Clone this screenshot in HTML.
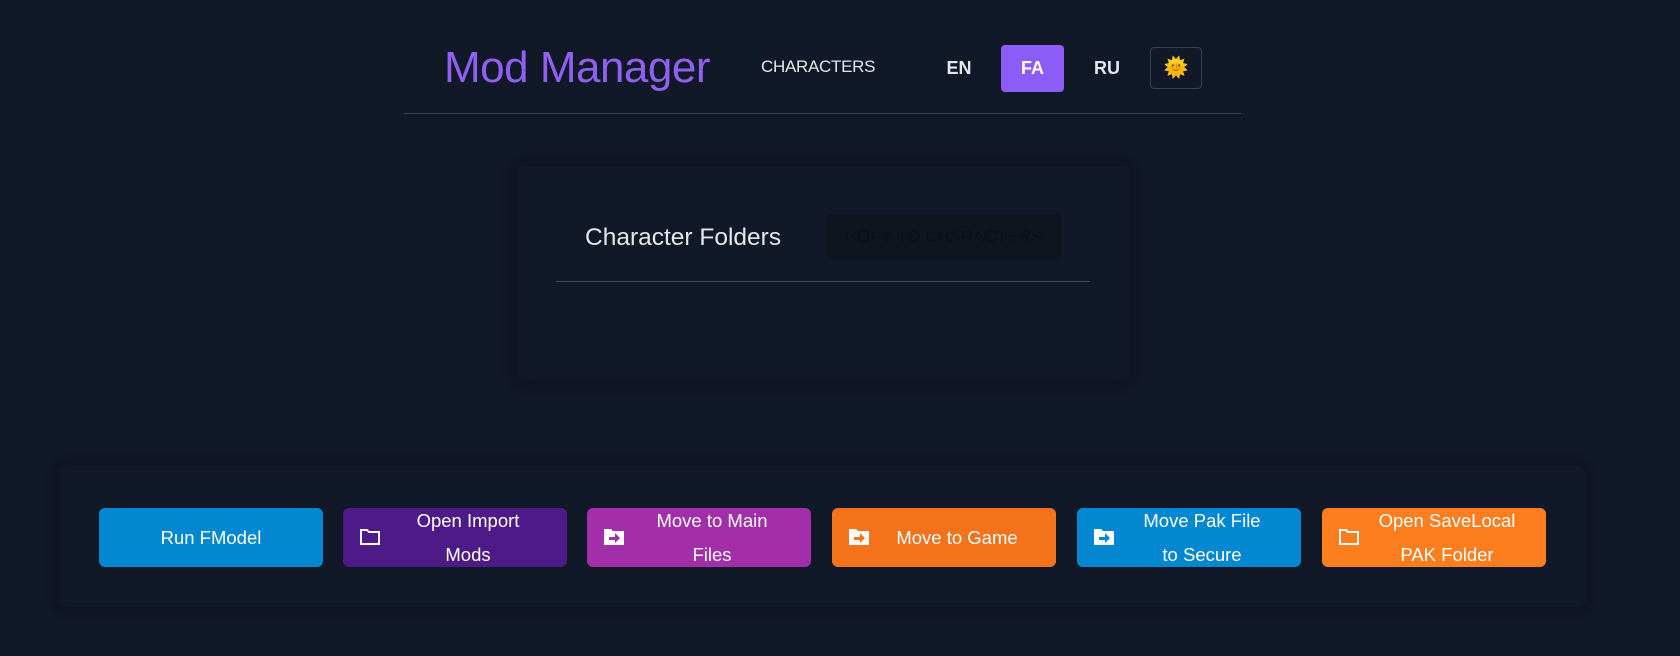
<!DOCTYPE html>
<html><head><meta charset="utf-8"><style>
*{box-sizing:border-box;margin:0;padding:0}
html,body{width:1680px;height:656px;background:#111827;overflow:hidden;font-family:"Liberation Sans",sans-serif;color:#e5e7eb}
.abs{position:absolute}
.title{left:444px;top:40px;font-size:44px;color:#9061f0;letter-spacing:-0.5px;line-height:56px}
.nav{left:761px;top:57px;font-size:17px;font-weight:500;letter-spacing:-0.3px;line-height:20px}
.lang{font-size:18px;font-weight:bold;line-height:47px;text-align:center;top:45px;height:47px}
.hline{left:404px;top:113px;width:837px;height:1px;background:#374151}
.card{left:517px;top:166px;width:613px;height:214px;background:#111827;box-shadow:0 0 10px 4px rgba(12,16,26,0.45);border-radius:6px}
.cf{left:585px;top:224px;font-size:24.5px;line-height:28px}
.copy{left:826px;top:214px;width:235px;height:46px;background:#0f141e;border-radius:6px;color:#0c1018;font-size:17px;line-height:46px;text-align:center}
.cline{left:556px;top:281px;width:534px;height:1px;background:#3b4656}
.panel{left:59px;top:466px;width:1527px;height:141px;background:#111827;box-shadow:0 0 8px 4px rgba(12,16,26,0.45);border-radius:8px}
.btn{top:508px;width:224px;height:59px;border-radius:6px;color:#fff;font-size:18.5px;line-height:34px;display:flex;align-items:center;justify-content:center;text-align:center}
.btn svg{position:absolute;left:16px;top:19px}
.btn span{padding-left:26px;width:100%;display:block}
</style></head><body>
<div class="abs title">Mod Manager</div>
<div class="abs nav">CHARACTERS</div>
<div class="abs lang" style="left:936px;width:46px">EN</div>
<div class="abs lang" style="left:1001px;width:63px;background:#8b5cf6;border-radius:4px;color:#fff">FA</div>
<div class="abs lang" style="left:1084px;width:46px">RU</div>
<div class="abs" style="left:1150px;top:47px;width:52px;height:42px;border:1px solid #374151;border-radius:4px;font-size:20px;line-height:40px;text-align:center">🌞</div>
<div class="abs hline"></div>
<div class="abs card"></div>
<div class="abs cf">Character Folders</div>
<div class="abs copy">COPY TO CHARACTERS</div>
<div class="abs cline"></div>
<div class="abs panel"></div>

<div class="abs btn" style="left:99px;background:#0288d1">Run FModel</div>
<div class="abs btn" style="left:343px;background:#4e1a88"><svg width="22" height="20" viewBox="0 0 22 20"><path d="M2 3h6l2 2h10v12H2z" fill="none" stroke="#fff" stroke-width="2"/></svg><span>Open Import<br>Mods</span></div>
<div class="abs btn" style="left:587px;background:#a22ea9"><svg width="22" height="20" viewBox="0 0 22 20"><path d="M1 2h7l2 2h11v14H1z" fill="#fff"/><path d="M6 10h6V6l5 5-5 5v-3H6z" fill="#a22ea9"/></svg><span>Move to Main<br>Files</span></div>
<div class="abs btn" style="left:832px;background:#f4721c"><svg width="22" height="20" viewBox="0 0 22 20"><path d="M1 2h7l2 2h11v14H1z" fill="#fff"/><path d="M6 10h6V6l5 5-5 5v-3H6z" fill="#f4721c"/></svg><span>Move to Game</span></div>
<div class="abs btn" style="left:1077px;background:#0288d1"><svg width="22" height="20" viewBox="0 0 22 20"><path d="M1 2h7l2 2h11v14H1z" fill="#fff"/><path d="M6 10h6V6l5 5-5 5v-3H6z" fill="#0288d1"/></svg><span>Move Pak File<br>to Secure</span></div>
<div class="abs btn" style="left:1322px;background:#fd7e1e"><svg width="22" height="20" viewBox="0 0 22 20"><path d="M2 3h6l2 2h10v12H2z" fill="none" stroke="#fff" stroke-width="2"/></svg><span>Open SaveLocal<br>PAK Folder</span></div>
</body></html>
